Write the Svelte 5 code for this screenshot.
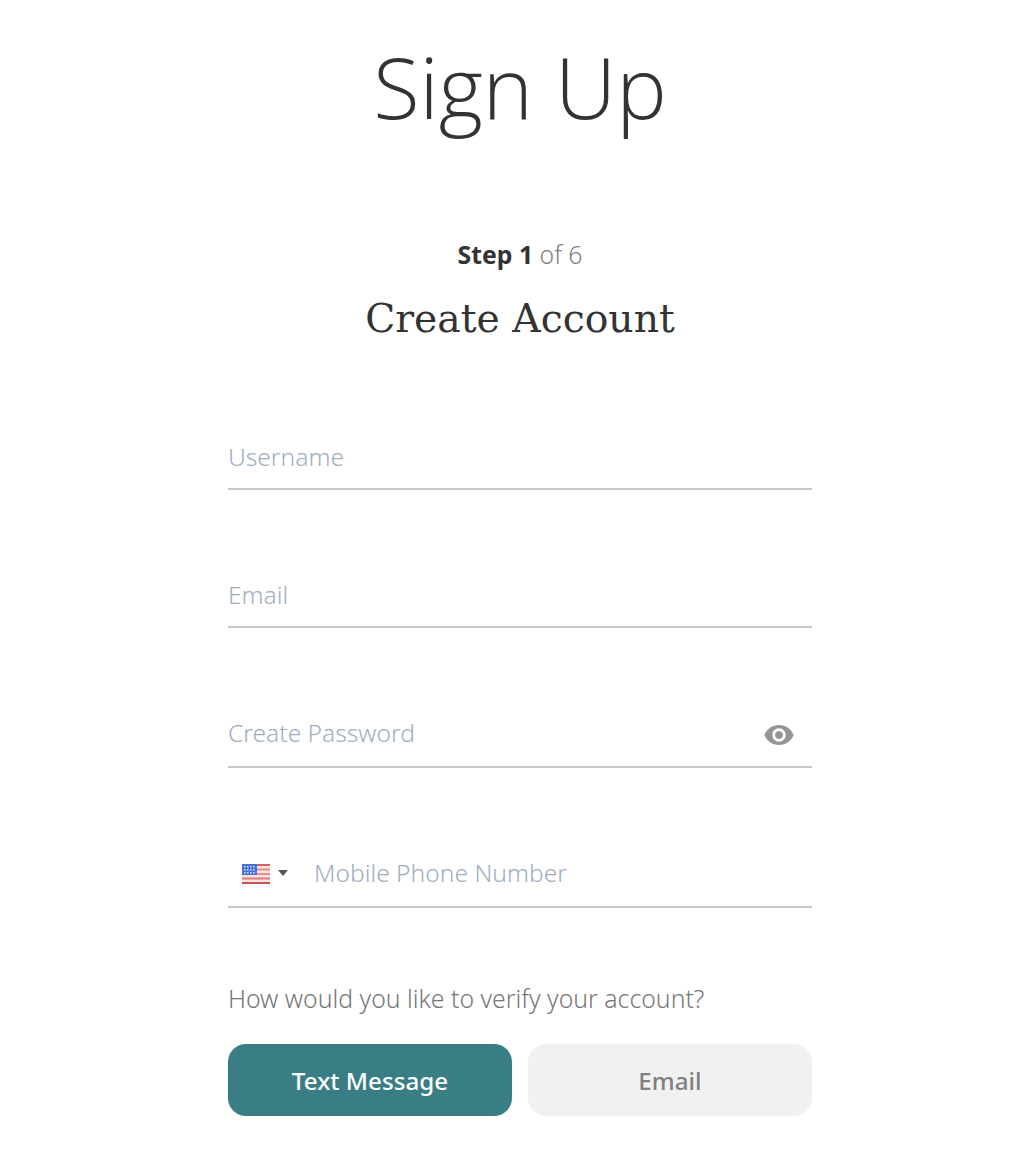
<script>
    let username = $state('');
    let email = $state('');
    let password = $state('');
    let phone = $state('');
    let showPassword = $state(false);
    let verifyBy = $state('text');
</script>

<div class="page">
    <h1>Sign Up</h1>
    <p class="step"><b>Step 1</b> of 6</p>
    <h2>Create Account</h2>

    <form class="form" onsubmit={(e) => e.preventDefault()}>
        <div class="field">
            <input type="text" placeholder="Username" bind:value={username} />
        </div>
        <div class="field">
            <input type="email" placeholder="Email" bind:value={email} />
        </div>
        <div class="field tall">
            <input type={showPassword ? 'text' : 'password'} placeholder="Create Password" bind:value={password} />
            <button type="button" class="eye" aria-label="Show password" onclick={() => (showPassword = !showPassword)}>
                <svg width="32" height="32" viewBox="0 0 24 24" fill="#959595">
                    <path d="M12 4.5C7 4.5 2.73 7.61 1 12c1.73 4.39 6 7.5 11 7.5s9.27-3.11 11-7.5c-1.73-4.39-6-7.5-11-7.5zM12 17c-2.76 0-5-2.24-5-5s2.24-5 5-5 5 2.24 5 5-2.24 5-5 5zm0-8c-1.66 0-3 1.34-3 3s1.34 3 3 3 3-1.34 3-3-1.34-3-3-3z" />
                </svg>
            </button>
        </div>
        <div class="field tall">
            <div class="country">
                <svg class="flag" width="28" height="20" viewBox="0 0 28 20">
                    <rect width="28" height="20" fill="#f6e4e2" />
                    <rect y="0" width="28" height="2" fill="#d9625c" />
                    <rect y="4.5" width="28" height="2" fill="#e2908a" />
                    <rect y="9" width="28" height="2" fill="#e2908a" />
                    <rect y="13.5" width="28" height="2" fill="#e07b75" />
                    <rect y="18" width="28" height="2" fill="#c9544e" />
                    <rect width="15" height="11" fill="#4a6fd8" />
                    <g fill="#d6e0fa">
                        <rect x="2" y="2" width="1.5" height="1.5" />
                        <rect x="5" y="2" width="1.5" height="1.5" />
                        <rect x="8" y="2" width="1.5" height="1.5" />
                        <rect x="11" y="2" width="1.5" height="1.5" />
                        <rect x="2" y="5" width="1.5" height="1.5" />
                        <rect x="5" y="5" width="1.5" height="1.5" />
                        <rect x="8" y="5" width="1.5" height="1.5" />
                        <rect x="11" y="5" width="1.5" height="1.5" />
                        <rect x="2" y="8" width="1.5" height="1.5" />
                        <rect x="5" y="8" width="1.5" height="1.5" />
                        <rect x="8" y="8" width="1.5" height="1.5" />
                        <rect x="11" y="8" width="1.5" height="1.5" />
                    </g>
                </svg>
                <span class="caret"></span>
            </div>
            <input type="tel" placeholder="Mobile Phone Number" bind:value={phone} />
        </div>

        <p class="question">How would you like to verify your account?</p>
        <div class="choices">
            <button type="button" class="choice" class:active={verifyBy === 'text'} onclick={() => (verifyBy = 'text')}>Text Message</button>
            <button type="button" class="choice" class:active={verifyBy === 'email'} onclick={() => (verifyBy = 'email')}>Email</button>
        </div>
    </form>
</div>

<style>
    :global(body) {
        background: #fff;
        font-family: "Noto Sans", "Open Sans", sans-serif;
    }
    .page {
        width: 1040px;
        height: 1172px;
        overflow: hidden;
        text-align: center;
        padding-top: 38px;
        box-sizing: border-box;
    }
    h1 {
        margin: 0;
        font-family: "Open Sans", "Noto Sans", sans-serif;
        font-weight: 300;
        font-size: 85px;
        line-height: 96px;
        color: #333;
    }
    .step {
        margin: 101px 0 0;
        font-size: 24.8px;
        line-height: 38px;
        color: #808080;
        font-weight: 300;
    }
    .step b {
        color: #333;
        font-weight: 700;
    }
    h2 {
        margin: 18px 0 0;
        font-family: "DejaVu Serif", "Liberation Serif", serif;
        font-weight: 400;
        font-size: 39.3px;
        line-height: 56px;
        color: #333;
    }
    .form {
        width: 584px;
        margin: 77px auto 0;
        text-align: left;
    }
    .field {
        display: flex;
        align-items: center;
        height: 64px;
        margin-bottom: 70px;
        border-bottom: 2px solid #c8c8c8;
    }
    .field:first-child {
        margin-bottom: 72px;
    }
    .field.tall {
        height: 68px;
    }
    input {
        flex: 1;
        min-width: 0;
        border: 0;
        outline: 0;
        padding: 0;
        background: none;
        font: inherit;
        font-size: 24.6px;
        font-weight: 300;
        color: #333;
    }
    input::placeholder {
        color: #a0aec0;
        opacity: 1;
    }
    .eye {
        display: flex;
        border: 0;
        padding: 6px 0 0;
        margin-right: 17px;
        background: none;
        cursor: pointer;
    }
    .country {
        display: flex;
        align-items: center;
        width: 86px;
        padding: 4px 0 0 14px;
        box-sizing: border-box;
    }
    .flag {
        filter: blur(0.6px);
    }
    .caret {
        margin: -2px 0 0 8px;
        border-left: 5px solid transparent;
        border-right: 5px solid transparent;
        border-top: 6px solid #555;
    }
    .question {
        margin: 0;
        padding-top: 2px;
        font-size: 24.8px;
        line-height: 36px;
        font-weight: 300;
        color: #777;
    }
    .choices {
        display: grid;
        grid-template-columns: 1fr 1fr;
        gap: 16px;
        margin-top: 28px;
    }
    .choice {
        height: 72px;
        border: 0;
        border-radius: 18px;
        background: #f1f1f1;
        color: #808080;
        font: inherit;
        font-size: 24.2px;
        font-weight: 500;
        cursor: pointer;
    }
    .choice.active {
        background: #397d85;
        color: #fff;
    }
</style>
